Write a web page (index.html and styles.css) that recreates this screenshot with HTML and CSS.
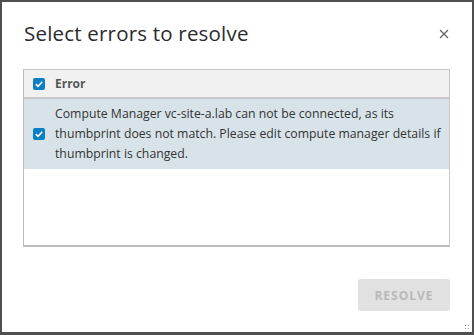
FILE: index.html
```html
<!DOCTYPE html>
<html>
<head>
<meta charset="utf-8">
<link rel="stylesheet" href="styles.css">
</head>
<body>
<div class="dialog">
  <div class="header">
    <h1 class="title">Select errors to resolve</h1>
    <button class="close" aria-label="Close">
      <svg width="10" height="10" viewBox="0 0 10 10"><path d="M1 1L9 9M9 1L1 9" stroke="#666" stroke-width="1.3" fill="none"/></svg>
    </button>
  </div>
  <div class="grid">
    <div class="row head">
      <span class="cb"><svg width="12" height="12" viewBox="0 0 12 12"><path d="M2.8 6.2L5 8.3L9.3 3.8" stroke="#fff" stroke-width="1.6" fill="none"/></svg></span>
      <span class="col">Error</span>
    </div>
    <div class="row sel">
      <span class="cb"><svg width="12" height="12" viewBox="0 0 12 12"><path d="M2.8 6.2L5 8.3L9.3 3.8" stroke="#fff" stroke-width="1.6" fill="none"/></svg></span>
      <span class="msg">Compute Manager vc-site-a.lab can not be connected, as its<br>thumbprint does not match. Please edit compute manager details if<br>thumbprint is changed.</span>
    </div>
  </div>
  <div class="footer">
    <button class="btn">RESOLVE</button>
  </div>
  <div class="grip"></div>
</div>
</body>
</html>
```
FILE: styles.css
```css
html, body { margin: 0; padding: 0; }
body { width: 474px; height: 335px; background: #4f4f4f; font-family: "Open Sans", "Liberation Sans", sans-serif; }
.dialog {
  position: relative;
  box-sizing: border-box;
  width: 474px; height: 335px;
  border: 2px solid #4f4f4f;
  border-bottom-width: 3px;
  background: #fff;
  display: flex; flex-direction: column;
}
.header { display: flex; align-items: flex-start; justify-content: space-between; padding: 18px 22px 0 22px; height: 49px; box-sizing: border-box; }
.title { margin: 0; font-size: 20.5px; font-weight: 400; color: #2b2b2b; line-height: 26px; letter-spacing: 0.2px; }
.close { border: 0; background: none; padding: 0; margin: 9px 1px 0 0; width: 10px; height: 10px; display: block; }
.close svg { display: block; }
.grid {
  margin: 18px 22px 0 21px;
  height: 178px;
  box-sizing: border-box;
  border: 1px solid #c8c8c8;
  border-bottom: 2px solid #bdbdbd;
  border-left-color: #bdbdbd;
}
.row { display: flex; align-items: center; padding-left: 9px; box-sizing: border-box; }
.head { height: 29px; background: #f1f1f1; border-bottom: 2px solid #c8c8c8; }
.sel { height: 70px; background: #d8e3e9; }
.cb { width: 12px; height: 12px; border-radius: 2px; background: #0a7fc4; display: block; flex: none; }
.cb svg { display: block; }
.col { margin-left: 10px; font-size: 12px; font-weight: 700; color: #565656; }
.msg { margin-left: 10px; font-size: 12.25px; line-height: 20px; color: #333; white-space: nowrap; }
.footer { display: flex; justify-content: flex-end; padding: 32px 22px 0 0; }
.btn {
  width: 92px; height: 32px; border: 0; border-radius: 3px;
  background: #e1e1e1; color: #b9b9b9;
  font-family: "Open Sans", "Liberation Sans", sans-serif;
  font-size: 12px; font-weight: 700; letter-spacing: 1px; padding: 0;
}
.grip {
  position: absolute; right: 2px; bottom: 2px; width: 6px; height: 6px;
  background-image: radial-gradient(circle, #999 0.8px, transparent 1px);
  background-size: 3px 3px;
}
```
